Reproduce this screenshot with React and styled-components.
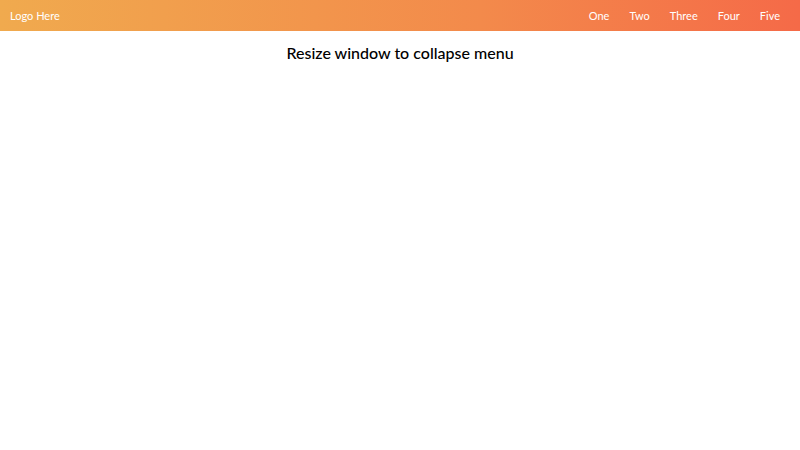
import styled, { createGlobalStyle } from "styled-components"

const GlobalStyle = createGlobalStyle`
  body {
    margin: 0;
    font-family: Lato, "Open Sans", sans-serif;
    background: #fff;
  }
`

const Nav = styled.nav`
  display: flex;
  align-items: center;
  justify-content: space-between;
  height: 31px;
  padding: 0 10px;
  background: linear-gradient(to right, #f0aa4e, #f38a4b 60%, #f56a48);
  color: #fff;
`

const Logo = styled.div`
  font-size: 11px;
  font-weight: 400;
`

const Menu = styled.ul`
  display: flex;
  margin: 0;
  padding: 0;
  list-style: none;
`

const MenuItem = styled.li`
  font-size: 11px;
  font-weight: 400;
  padding: 0 10px;
`

const Title = styled.h1`
  margin: 12px 0 0;
  text-align: center;
  font-size: 16px;
  font-weight: 500;
  color: #000;
`

function App() {
  const items = ["One", "Two", "Three", "Four", "Five"]

  return (
    <>
      <GlobalStyle />
      <Nav>
        <Logo>Logo Here</Logo>
        <Menu>
          {items.map(item => (
            <MenuItem key={item}>{item}</MenuItem>
          ))}
        </Menu>
      </Nav>
      <Title>Resize window to collapse menu</Title>
    </>
  )
}

export default App
